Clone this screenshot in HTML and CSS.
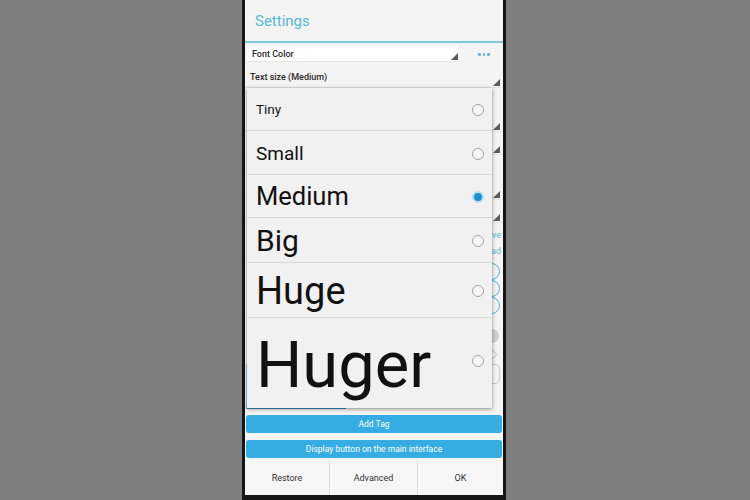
FILE: index.html
```html
<!DOCTYPE html>
<html>
<head>
<meta charset="utf-8">
<link rel="stylesheet" href="styles.css">
</head>
<body>
<div class="phone">
  <div class="screen">
    <div class="header">Settings</div>
    <div class="content">
      <div class="font-row">
        <div class="field"><span class="field-label">Font Color</span><span class="tri"></span></div>
        <div class="dots"><i></i><i></i><i></i></div>
      </div>
      <div class="row r26"><span class="row-label">Text size (Medium)</span><span class="tri"></span></div>
      <div class="row r44"><span class="tri"></span></div>
      <div class="row r23"><span class="tri"></span></div>
      <div class="row r45"><span class="tri"></span></div>
      <div class="row r23"><span class="tri"></span></div>
      <div class="links"><span>Save</span><span>Load</span></div>
      <div class="circles"><span class="ring"></span><span class="ring"></span><span class="ring"></span></div>
      <div class="shapes">
        <span class="dot-gray"></span>
        <span class="diamond"></span>
      </div>
      <div class="seek-row"><span class="seek"></span><span class="pill"></span></div>

      <div class="dialog">
        <div class="opt o1"><span class="t1">Tiny</span><span class="radio"></span></div>
        <div class="opt o2"><span class="t2">Small</span><span class="radio"></span></div>
        <div class="opt o3"><span class="t3">Medium</span><span class="radio on"></span></div>
        <div class="opt o4"><span class="t4">Big</span><span class="radio"></span></div>
        <div class="opt o5"><span class="t5">Huge</span><span class="radio"></span></div>
        <div class="opt o6"><span class="t6">Huger</span><span class="radio"></span></div>
      </div>
    </div>
    <div class="btn first">Add Tag</div>
    <div class="btn second">Display button on the main interface</div>
    <div class="bottom">
      <div class="cell">Restore</div>
      <div class="cell">Advanced</div>
      <div class="cell">OK</div>
    </div>
  </div>
</div>
</body>
</html>
```
FILE: styles.css
```css
* { box-sizing: border-box; }
html, body { margin: 0; padding: 0; }
body {
  background: #7f7f7f;
  width: 750px;
  height: 500px;
  overflow: hidden;
  font-family: Roboto, "Noto Sans", "Liberation Sans", sans-serif;
}
.phone {
  margin-left: 242px;
  width: 264px;
  height: 500px;
  border-left: 3px solid #161616;
  border-right: 3px solid #161616;
  border-bottom: 5px solid #161616;
}
.screen {
  width: 258px;
  height: 495px;
  background: #f4f4f4;
  display: flex;
  flex-direction: column;
}
.header {
  height: 43px;
  flex: none;
  padding-left: 10px;
  display: flex;
  align-items: center;
  padding-top: 1px;
  font-size: 15px;
  color: #56b9d4;
  border-bottom: 2px solid #7ccadc;
}
.content {
  position: relative;
  height: 369px;
  flex: none;
  display: flex;
  flex-direction: column;
}
.font-row {
  margin-top: 3px;
  height: 16px;
  display: flex;
  align-items: center;
}
.field {
  margin-left: 2px;
  width: 211px;
  height: 16px;
  background: #fff;
  display: flex;
  border-bottom: 1px solid #e4e4e4;
}
.field-label, .row-label {
  flex: 1;
  align-self: center;
  padding-left: 5px;
  font-size: 9px;
  font-weight: 500;
  color: #2a2a2a;
}
.tri {
  flex: none;
  align-self: flex-end;
  width: 7px;
  height: 7px;
  margin-bottom: 1px;
  background: #5a5a5a;
  clip-path: polygon(100% 0, 100% 100%, 0 100%);
}
.dots {
  margin-left: 20px;
  display: flex;
  gap: 2px;
  padding-top: 1px;
}
.dots i {
  display: block;
  width: 2.5px;
  height: 2.5px;
  border-radius: 50%;
  background: #5bb7d6;
}
.row {
  display: flex;
  padding-right: 3px;
  border-bottom: 1px solid #e6e6e6;
}
.row .row-label { align-self: center; padding-top: 4px; }
.row .tri { margin-left: auto; }
.r26 { height: 26px; }
.r44 { height: 44px; }
.r23 { height: 23px; }
.r45 { height: 45px; }
.links {
  height: 40px;
  display: flex;
  flex-direction: column;
  align-items: flex-end;
  justify-content: center;
  gap: 6px;
  padding-right: 2px;
  font-size: 9px;
  color: #5bb7d6;
}
.circles {
  height: 51px;
  display: flex;
  flex-direction: column;
  align-items: flex-end;
  padding-right: 3px;
}
.ring {
  display: block;
  width: 17px;
  height: 17px;
  border: 1.5px solid #4bb0d3;
  border-radius: 50%;
}
.shapes {
  height: 50px;
  display: flex;
  flex-direction: column;
  align-items: flex-end;
  padding: 15px 4px 0 0;
  gap: 8px;
}
.dot-gray {
  display: block;
  width: 14px;
  height: 14px;
  border-radius: 50%;
  background: #cfcfcf;
}
.diamond {
  display: block;
  width: 7px;
  height: 7px;
  border: 1px solid #c8c8c8;
  transform: rotate(45deg);
  margin-right: 3px;
}
.seek-row {
  height: 47px;
  display: flex;
  justify-content: space-between;
  align-items: flex-start;
  padding-right: 3px;
}
.seek {
  display: block;
  margin-left: 1px;
  width: 100px;
  height: 45px;
  border-left: 1px solid #9cd2e6;
  border-bottom: 4px solid #3b93c6;
}
.pill {
  display: block;
  width: 22px;
  height: 20px;
  border: 1px solid #cdcdcd;
  border-radius: 5px;
}
.dialog {
  position: absolute;
  left: 2px;
  top: 45px;
  width: 245px;
  height: 320px;
  background: #f1f1f1;
  box-shadow: 0 1px 4px rgba(0,0,0,0.45);
  display: flex;
  flex-direction: column;
}
.opt {
  display: flex;
  align-items: center;
  justify-content: space-between;
  padding-left: 9px;
  padding-right: 8px;
  padding-top: 2px;
  border-bottom: 1px solid #dadada;
  color: #111;
  line-height: 1;
}
.o1 { height: 43px; }
.o2 { height: 44px; }
.o3 { height: 43px; }
.o4 { height: 45px; }
.o5 { height: 55px; }
.o6 { height: 90px; border-bottom: none; }
.t1 { font-size: 13.5px; }
.t2 { font-size: 19px; }
.t3 { font-size: 25.5px; }
.t4 { font-size: 30px; }
.t5 { font-size: 38px; }
.t6 { font-size: 65px; margin-top: 2px; }
.radio {
  flex: none;
  width: 12px;
  height: 12px;
  border: 1px solid #a3a3a3;
  border-radius: 50%;
  background: #f7f7f7;
}
.radio.on {
  border: 2px solid #b8def1;
  background: #1a8fd0;
}
.o6 .radio { margin-top: -6px; }
.btn {
  flex: none;
  margin: 0 1px;
  height: 18px;
  border-radius: 3px;
  background: #35ade2;
  color: #fff;
  font-size: 8.5px;
  display: flex;
  align-items: center;
  justify-content: center;
}
.btn.first { margin-top: 3px; }
.btn.second { margin-top: 7px; }
.bottom {
  flex: 1;
  margin-top: 3px;
  display: flex;
  background: #f6f6f6;
}
.cell {
  display: flex;
  align-items: center;
  justify-content: center;
  font-size: 9px;
  color: #333;
  border-right: 1px solid #dcdcdc;
}
.cell:nth-child(1) { width: 85px; }
.cell:nth-child(2) { width: 88px; }
.cell:nth-child(3) { flex: 1; border-right: none; }
```
